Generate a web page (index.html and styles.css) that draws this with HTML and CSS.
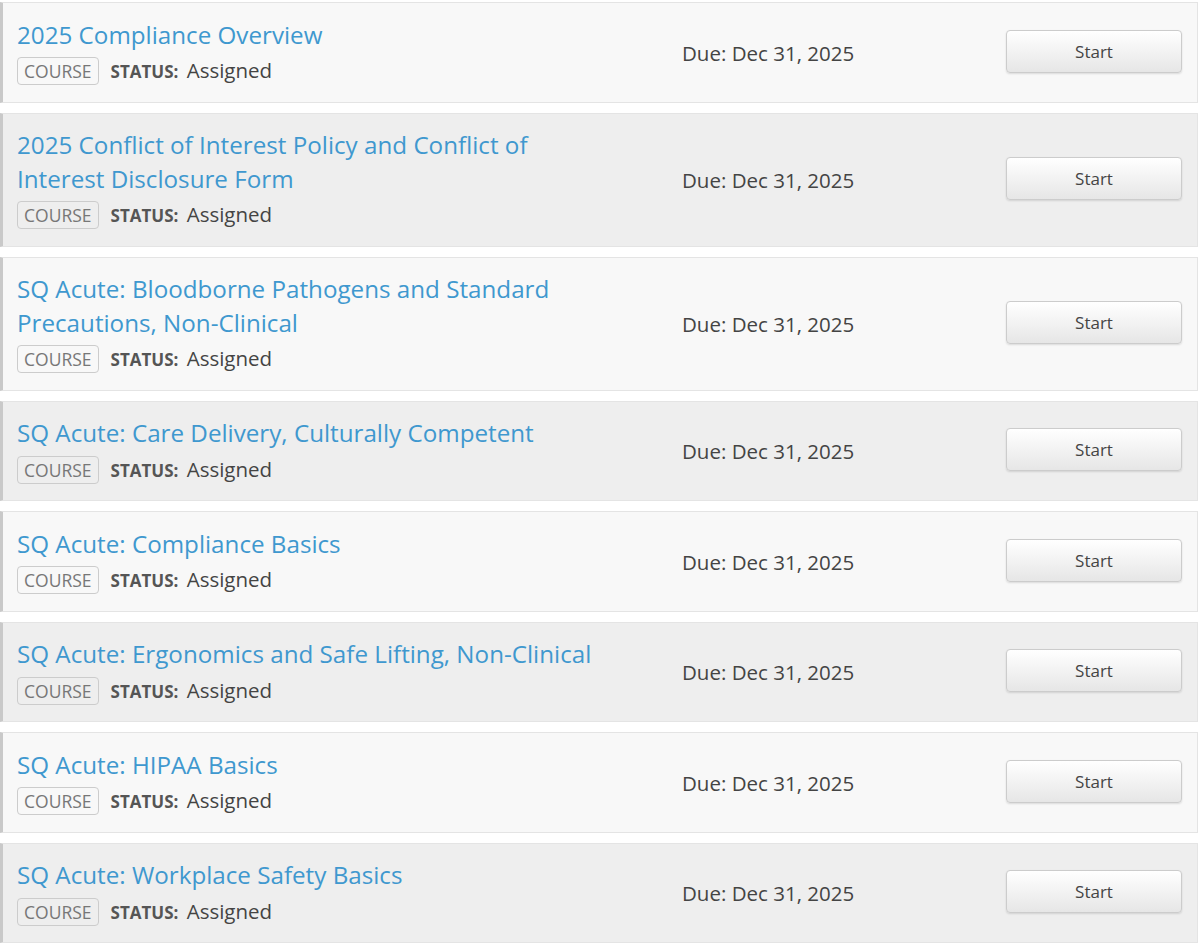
FILE: index.html
```html
<!DOCTYPE html>
<html lang="en">
<head>
  <meta charset="UTF-8">
  <meta name="viewport" content="width=device-width, initial-scale=1.0">
  <title>Assigned Courses</title>
  <link rel="stylesheet" href="styles.css">
</head>
<body>
  <div class="course-list">

    <div class="course-row odd">
      <div class="course-info">
        <a class="course-title" href="#">2025 Compliance Overview</a>
        <div class="course-meta">
          <span class="badge">COURSE</span>
          <span class="status"><b class="status-label">STATUS:</b> <span class="status-value">Assigned</span></span>
        </div>
      </div>
      <div class="due">Due: Dec 31, 2025</div>
      <button class="start-btn">Start</button>
    </div>

    <div class="course-row even">
      <div class="course-info">
        <a class="course-title" href="#">2025 Conflict of Interest Policy and Conflict of Interest Disclosure Form</a>
        <div class="course-meta">
          <span class="badge">COURSE</span>
          <span class="status"><b class="status-label">STATUS:</b> <span class="status-value">Assigned</span></span>
        </div>
      </div>
      <div class="due">Due: Dec 31, 2025</div>
      <button class="start-btn">Start</button>
    </div>

    <div class="course-row odd">
      <div class="course-info">
        <a class="course-title" href="#">SQ Acute: Bloodborne Pathogens and Standard Precautions, Non-Clinical</a>
        <div class="course-meta">
          <span class="badge">COURSE</span>
          <span class="status"><b class="status-label">STATUS:</b> <span class="status-value">Assigned</span></span>
        </div>
      </div>
      <div class="due">Due: Dec 31, 2025</div>
      <button class="start-btn">Start</button>
    </div>

    <div class="course-row even">
      <div class="course-info">
        <a class="course-title" href="#">SQ Acute: Care Delivery, Culturally Competent</a>
        <div class="course-meta">
          <span class="badge">COURSE</span>
          <span class="status"><b class="status-label">STATUS:</b> <span class="status-value">Assigned</span></span>
        </div>
      </div>
      <div class="due">Due: Dec 31, 2025</div>
      <button class="start-btn">Start</button>
    </div>

    <div class="course-row odd">
      <div class="course-info">
        <a class="course-title" href="#">SQ Acute: Compliance Basics</a>
        <div class="course-meta">
          <span class="badge">COURSE</span>
          <span class="status"><b class="status-label">STATUS:</b> <span class="status-value">Assigned</span></span>
        </div>
      </div>
      <div class="due">Due: Dec 31, 2025</div>
      <button class="start-btn">Start</button>
    </div>

    <div class="course-row even">
      <div class="course-info">
        <a class="course-title" href="#">SQ Acute: Ergonomics and Safe Lifting, Non-Clinical</a>
        <div class="course-meta">
          <span class="badge">COURSE</span>
          <span class="status"><b class="status-label">STATUS:</b> <span class="status-value">Assigned</span></span>
        </div>
      </div>
      <div class="due">Due: Dec 31, 2025</div>
      <button class="start-btn">Start</button>
    </div>

    <div class="course-row odd">
      <div class="course-info">
        <a class="course-title" href="#">SQ Acute: HIPAA Basics</a>
        <div class="course-meta">
          <span class="badge">COURSE</span>
          <span class="status"><b class="status-label">STATUS:</b> <span class="status-value">Assigned</span></span>
        </div>
      </div>
      <div class="due">Due: Dec 31, 2025</div>
      <button class="start-btn">Start</button>
    </div>

    <div class="course-row even">
      <div class="course-info">
        <a class="course-title" href="#">SQ Acute: Workplace Safety Basics</a>
        <div class="course-meta">
          <span class="badge">COURSE</span>
          <span class="status"><b class="status-label">STATUS:</b> <span class="status-value">Assigned</span></span>
        </div>
      </div>
      <div class="due">Due: Dec 31, 2025</div>
      <button class="start-btn">Start</button>
    </div>

  </div>
</body>
</html>
```

FILE: styles.css
```css
body {
  margin: 0;
  background-color: #fff;
  font-family: 'Open Sans', 'Liberation Sans', sans-serif;
  color: #444;
}

.course-list {
  padding: 2px 2px 0 0;
}

.course-row {
  display: flex;
  align-items: center;
  margin-bottom: 10px;
  padding: 14.5px 15px 16.5px 14px;
  border: 1px solid #e4e4e4;
  border-left: 3px solid #c9c9c9;
}

.odd {
  background-color: #f8f8f8;
}

.even {
  background-color: #eeeeee;
}

.course-info {
  width: 588px;
  margin-right: 77px;
}

.course-title {
  display: block;
  font-size: 24.2px;
  line-height: 33.5px;
  color: #3f98cf;
  text-decoration: none;
}

.course-meta {
  display: flex;
  align-items: center;
  margin-top: 6px;
  height: 28px;
}

.badge {
  display: inline-flex;
  align-items: center;
  height: 26px;
  padding: 0 6px;
  border: 1px solid #cccccc;
  border-radius: 4px;
  font-size: 17.5px;
  color: #777;
}

.status {
  margin-left: 12px;
  font-size: 20.5px;
  line-height: 28px;
}

.status-label {
  font-size: 17px;
  font-weight: bold;
  color: #555;
}

.status-value {
  margin-left: 3px;
  color: #444;
}

.due {
  flex: 1;
  font-size: 20.5px;
  color: #444;
  padding-top: 3px;
}

.start-btn {
  width: 176px;
  height: 43px;
  border: 1px solid #cccccc;
  border-radius: 4px;
  background: linear-gradient(#ffffff, #e6e6e6);
  box-shadow: 0 1px 2px rgba(0, 0, 0, 0.12);
  font-family: 'Open Sans', 'Liberation Sans', sans-serif;
  font-size: 17px;
  color: #444;
  cursor: pointer;
}
```
